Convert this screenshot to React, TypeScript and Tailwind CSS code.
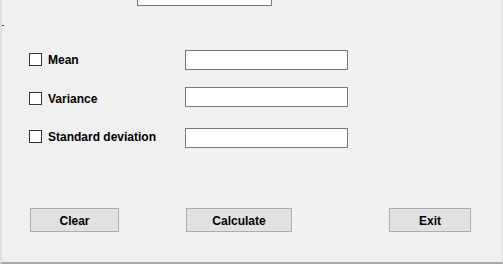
import { useState } from 'react'

const font = { fontFamily: '"Liberation Sans", Arial, sans-serif' }

function Row({ label, offset, checked, onToggle }: { label: string; offset: string; checked: boolean; onToggle: () => void }) {
  return (
    <div className="flex items-start pl-[27px]">
      <div className={'flex w-[156px] items-center gap-[6px] ' + offset}>
        <button
          type="button"
          onClick={onToggle}
          className="flex h-[13px] w-[13px] shrink-0 items-center justify-center border border-[#333333] bg-white text-[10px] leading-none"
        >
          {checked ? '✓' : ''}
        </button>
        <span className="pt-[2px] text-[12px] leading-[13px] font-bold text-black">{label}</span>
      </div>
      <input className="h-[20px] w-[163px] border border-[#7a7a7a] bg-white px-1 text-[12px] outline-none" />
    </div>
  )
}

export default function App() {
  const [checks, setChecks] = useState([false, false, false])
  const toggle = (i: number) => setChecks((c) => c.map((v, j) => (j === i ? !v : v)))

  return (
    <div
      className="relative flex h-[264px] w-[503px] flex-col overflow-hidden border-b-2 border-l-2 border-r border-b-[#a9a9a9] border-l-[#e1e1e1] border-r-[#dedede] bg-[#f0f0f0]"
      style={font}
    >
      <div className="absolute left-0 top-[25px] h-[1px] w-[2px] bg-[#1f6f8b]" />

      {/* top text box, clipped by the window edge */}
      <div className="ml-[135px] h-[6px] w-[135px] border-x border-b border-[#7a7a7a] bg-white" />

      <div className="mt-[44px] flex flex-col">
        <Row label="Mean" offset="mt-[2px]" checked={checks[0]} onToggle={() => toggle(0)} />
        <div className="mt-[17px]">
          <Row label="Variance" offset="mt-[4px]" checked={checks[1]} onToggle={() => toggle(1)} />
        </div>
        <div className="mt-[21px]">
          <Row label="Standard deviation" offset="mt-[1px]" checked={checks[2]} onToggle={() => toggle(2)} />
        </div>
      </div>

      <div className="mt-[60px] flex items-center pl-[28px]">
        <button
          type="button"
          className="h-[24px] w-[89px] border border-[#adadad] bg-[#e1e1e1] pt-[1px] text-[12px] font-bold text-black"
        >
          Clear
        </button>
        <button
          type="button"
          className="ml-[67px] h-[24px] w-[106px] border border-[#adadad] bg-[#e1e1e1] pt-[1px] text-[12px] font-bold text-black"
        >
          Calculate
        </button>
        <button
          type="button"
          className="ml-[97px] h-[24px] w-[82px] border border-[#adadad] bg-[#e1e1e1] pt-[1px] text-[12px] font-bold text-black"
        >
          Exit
        </button>
      </div>
    </div>
  )
}
